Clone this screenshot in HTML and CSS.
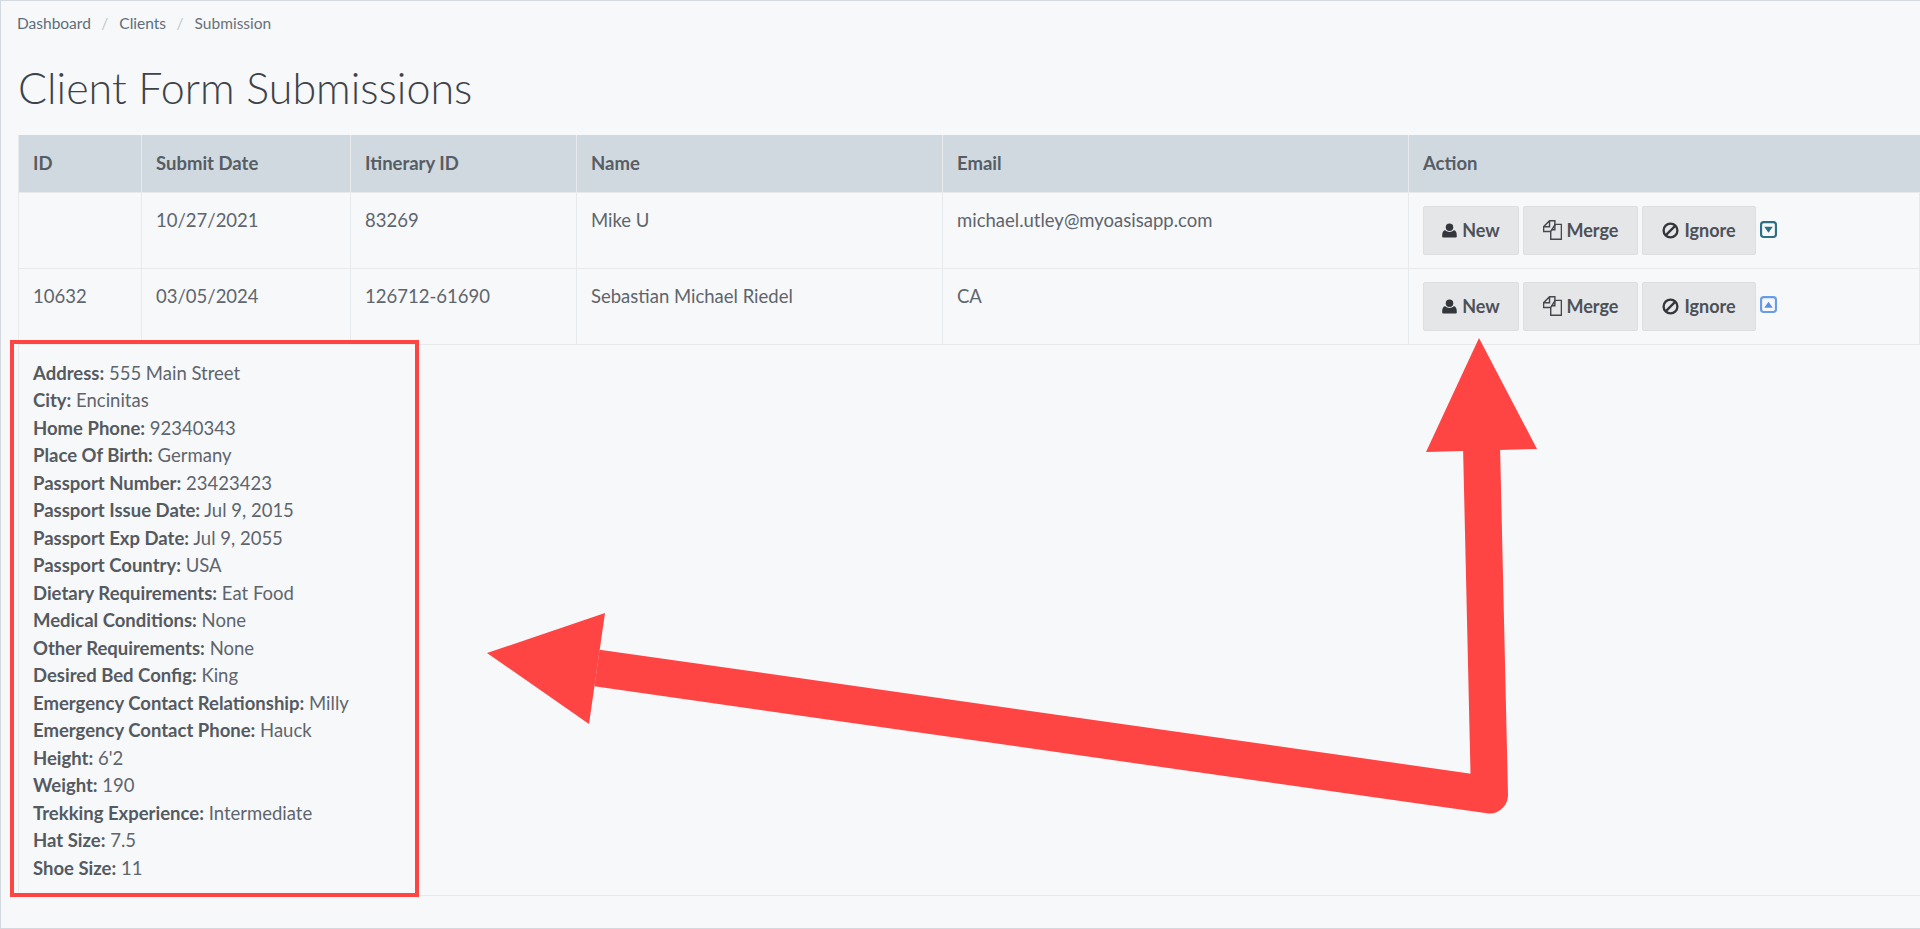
FILE: index.html
```html
<!DOCTYPE html>
<html lang="en">
<head>
  <meta charset="UTF-8">
  <title>Client Form Submissions</title>
  <link rel="stylesheet" href="styles.css">
</head>
<body>
  <div class="page">
    <nav class="breadcrumb">
      <a>Dashboard</a><span class="sep">/</span><a>Clients</a><span class="sep">/</span><span class="current">Submission</span>
    </nav>
    <h1>Client Form Submissions</h1>

    <table class="subs">
      <colgroup>
        <col class="c-id"><col class="c-date"><col class="c-itin"><col class="c-name"><col class="c-email"><col class="c-action">
      </colgroup>
      <thead>
        <tr>
          <th>ID</th>
          <th>Submit Date</th>
          <th>Itinerary ID</th>
          <th>Name</th>
          <th>Email</th>
          <th>Action</th>
        </tr>
      </thead>
      <tbody>
        <tr class="row-one">
          <td></td>
          <td>10/27/2021</td>
          <td>83269</td>
          <td>Mike U</td>
          <td>michael.utley@myoasisapp.com</td>
          <td class="actions">
            <div class="btns">
              <button class="btn btn-new"><svg class="ico" viewBox="0 0 16 16"><circle cx="8" cy="4.500" r="4"/><path d="M1.500 15.500c-.8 0-1.300-.5-1.300-1.400 0-3.500.9-6.300 3.300-6.300 1.200 1.100 2.800 1.700 4.500 1.700s3.300-.6 4.500-1.700c2.400 0 3.300 2.800 3.300 6.300 0 .9-.5 1.400-1.300 1.400z"/></svg>New</button>
              <button class="btn btn-merge"><svg class="ico" viewBox="1 1 16 16.500"><path class="line" d="M6.500 1.500h4.500v3.500l-3.500 5.500H1.500V6.500zM6.500 1.500v5H1.500M11 4.500h5.500v12.500H7.500v-6.500"/><path class="line" d="M11 4.500v4.500H8"/></svg>Merge</button>
              <button class="btn btn-ignore"><svg class="ico" viewBox="0 0 16 16"><circle class="line thick" cx="8" cy="8" r="6.500"/><path class="line thick" d="M3.400 12.600l9.200-9.200"/></svg>Ignore</button>
              <svg class="toggle down" viewBox="0 0 16 16"><rect class="box" x="1" y="1" width="14" height="14" rx="2.500"/><path class="tri" d="M4 5.500h8L8 11z"/></svg>
            </div>
          </td>
        </tr>
        <tr class="row-two">
          <td>10632</td>
          <td>03/05/2024</td>
          <td>126712-61690</td>
          <td>Sebastian Michael Riedel</td>
          <td>CA</td>
          <td class="actions">
            <div class="btns">
              <button class="btn btn-new"><svg class="ico" viewBox="0 0 16 16"><circle cx="8" cy="4.500" r="4"/><path d="M1.500 15.500c-.8 0-1.300-.5-1.300-1.400 0-3.500.9-6.300 3.300-6.300 1.200 1.100 2.800 1.700 4.500 1.700s3.300-.6 4.500-1.700c2.400 0 3.300 2.800 3.300 6.300 0 .9-.5 1.400-1.300 1.400z"/></svg>New</button>
              <button class="btn btn-merge"><svg class="ico" viewBox="1 1 16 16.500"><path class="line" d="M6.500 1.500h4.500v3.500l-3.500 5.500H1.500V6.500zM6.500 1.500v5H1.500M11 4.500h5.500v12.500H7.500v-6.500"/><path class="line" d="M11 4.500v4.500H8"/></svg>Merge</button>
              <button class="btn btn-ignore"><svg class="ico" viewBox="0 0 16 16"><circle class="line thick" cx="8" cy="8" r="6.500"/><path class="line thick" d="M3.400 12.600l9.200-9.200"/></svg>Ignore</button>
              <svg class="toggle up" viewBox="0 0 16 16"><rect class="box" x="1" y="1" width="14" height="14" rx="2.500"/><path class="tri" d="M4 11h8L8 5.500z"/></svg>
            </div>
          </td>
        </tr>
        <tr class="detail-row">
          <td colspan="6">
            <ul class="details">
              <li><b>Address:</b> 555 Main Street</li>
              <li><b>City:</b> Encinitas</li>
              <li><b>Home Phone:</b> 92340343</li>
              <li><b>Place Of Birth:</b> Germany</li>
              <li><b>Passport Number:</b> 23423423</li>
              <li><b>Passport Issue Date:</b> Jul 9, 2015</li>
              <li><b>Passport Exp Date:</b> Jul 9, 2055</li>
              <li><b>Passport Country:</b> USA</li>
              <li><b>Dietary Requirements:</b> Eat Food</li>
              <li><b>Medical Conditions:</b> None</li>
              <li><b>Other Requirements:</b> None</li>
              <li><b>Desired Bed Config:</b> King</li>
              <li><b>Emergency Contact Relationship:</b> Milly</li>
              <li><b>Emergency Contact Phone:</b> Hauck</li>
              <li><b>Height:</b> 6'2</li>
              <li><b>Weight:</b> 190</li>
              <li><b>Trekking Experience:</b> Intermediate</li>
              <li><b>Hat Size:</b> 7.5</li>
              <li><b>Shoe Size:</b> 11</li>
            </ul>
          </td>
        </tr>
      </tbody>
    </table>
  </div>

  <!-- annotation layer drawn over the page -->
  <svg class="annotations" viewBox="0 0 1920 929">
    <rect class="note-box" x="12" y="342" width="405" height="553"/>
    <path class="note-line" d="M1481.500 445 L1489.500 795 L597 668"/>
    <path class="note-head" d="M1479 338 L1537 449 L1426 452 Z"/>
    <path class="note-head" d="M487 653 L605 613 L589 724 Z"/>
  </svg>
</body>
</html>
```

FILE: styles.css
```css
html, body {
  margin: 0;
  height: 100%;
  overflow: hidden;
}
body {
  font-family: "Lato", "Open Sans", sans-serif;
  font-size: 18.500px;
  color: #5f656c;
  background: #f6f8fa;
}
.page {
  box-sizing: border-box;
  height: 929px;
  padding: 12px 0 0 17px;
  border: 1px solid #d3d9de;
  border-right: 0;
}
.breadcrumb {
  font-size: 15.500px;
  line-height: 20px;
  margin-left: -1px;
  color: #5d6d7c;
}
.breadcrumb .sep {
  color: #c2c8ce;
  margin: 0 11px 0 10.500px;
}
.breadcrumb .current {
  color: #68717a;
}
h1 {
  font-size: 43px;
  font-weight: 300;
  line-height: 52px;
  height: 73px;
  margin: 29px 0 0;
  color: #3d4349;
}
.subs {
  width: 1902px;
  table-layout: fixed;
  border-collapse: collapse;
}
.c-id { width: 123px; }
.c-date { width: 209px; }
.c-itin { width: 226px; }
.c-name { width: 366px; }
.c-email { width: 466px; }
.subs th {
  box-sizing: border-box;
  background: #d0d9e0;
  color: #575d64;
  font-weight: 700;
  text-align: left;
  height: 57px;
  padding: 0 14px;
  border-left: 1px solid #e6eaed;
}
.subs td {
  box-sizing: border-box;
  vertical-align: top;
  height: 76px;
  padding: 14px 14px 0;
  border: 1px solid #e7eaed;
  line-height: 27px;
}
.subs td.actions {
  padding-top: 13px;
}
.btns {
  display: flex;
  gap: 4px;
}
.btn {
  box-sizing: border-box;
  display: flex;
  align-items: center;
  justify-content: center;
  gap: 5px;
  height: 49px;
  padding: 0;
  font: 700 18px "Lato", sans-serif;
  color: #4c5157;
  background: #e5e6e8;
  border: 1px solid #dcdee0;
  border-radius: 2px;
}
.btn-new { width: 96px; }
.btn-merge { width: 115px; }
.btn-ignore { width: 114px; }
.ico {
  width: 15px;
  height: 15px;
  fill: #33373b;
}
.btn-merge .ico {
  width: 19px;
  height: 20px;
}
.btn-ignore .ico {
  width: 17px;
  height: 17px;
}
.ico .line {
  fill: none;
  stroke: #44484d;
  stroke-width: 1.200;
}
.ico .thick {
  stroke: #33373b;
  stroke-width: 2.200;
}
.toggle {
  width: 17px;
  height: 17px;
}
.toggle .box {
  fill: none;
  stroke-width: 2;
}
.down { margin-top: 15px; }
.down .box { stroke: #2f6f86; }
.down .tri { fill: #2f6f86; }
.up { margin-top: 14px; }
.up .box { stroke: #6a9be8; }
.up .tri { fill: #5a8fe6; }
.subs .detail-row td {
  height: 551px;
  padding: 15px 14px 0;
  border-right: 0;
}
.details {
  list-style: none;
  margin: 0;
  padding: 0;
}
.details li {
  line-height: 27.500px;
}
.details b {
  color: #555a60;
}
.annotations {
  position: absolute;
  left: 0;
  top: 0;
  width: 1920px;
  height: 929px;
  pointer-events: none;
}
.note-box {
  fill: none;
  stroke: #ff4444;
  stroke-width: 4;
}
.note-line {
  fill: none;
  stroke: #ff4444;
  stroke-width: 37;
  stroke-linejoin: round;
}
.note-head {
  fill: #ff4444;
}
```
